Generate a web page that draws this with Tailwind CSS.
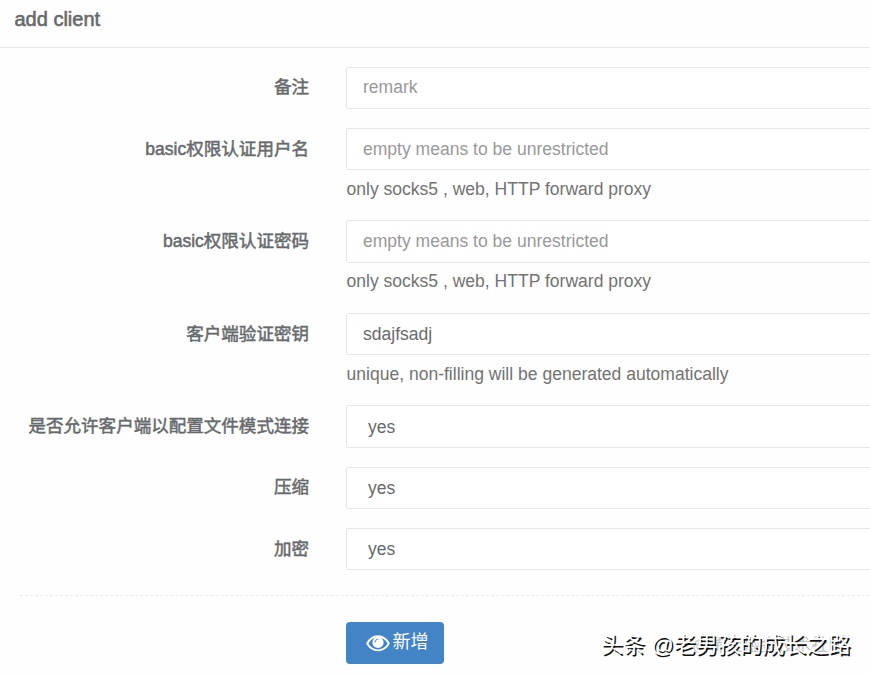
<!DOCTYPE html>
<html lang="zh">
<head>
  <meta charset="UTF-8" />
  <title>add client</title>
  <script src="https://cdn.jsdelivr.net/npm/@tailwindcss/browser@4"></script>
</head>

<body class="relative w-[870px] h-[675px] overflow-hidden bg-[#fefefe] font-['Liberation_Sans','Noto_Sans_CJK_SC',sans-serif] text-[17.55px] leading-[25px] text-[#676a6c]">

  <!-- TITLE -->
  <header class="h-12 pl-[14.5px] pt-[7px] border-b border-[#e7eaec]">
    <h5 class="text-[20px] leading-[25px] [-webkit-text-stroke:0.6px_#676a6c]">add client</h5>
  </header>

  <!-- FORM -->
  <form class="pt-[19px]">
    <div class="flex h-[61px]">
      <label class="w-[309px] shrink-0 mr-[37px] pt-[8px] text-right [-webkit-text-stroke:0.5px_#676a6c]">备注</label>
      <div class="w-[560px] shrink-0">
        <input type="text" placeholder="remark" class="block w-full h-[42px] px-4 pb-px border border-[#e5e6e7] rounded-[2px] bg-white placeholder:text-[#999]">
      </div>
    </div>

    <div class="flex h-[92px]">
      <label class="w-[309px] shrink-0 mr-[37px] pt-[9px] text-right [-webkit-text-stroke:0.5px_#676a6c]">basic权限认证用户名</label>
      <div class="w-[560px] shrink-0">
        <input type="text" placeholder="empty means to be unrestricted" class="block w-full h-[42px] px-4 border border-[#e5e6e7] rounded-[2px] bg-white placeholder:text-[#999]">
        <span class="block pt-[7px] pl-[0.5px] text-[#737373]">only socks5 , web, HTTP forward proxy</span>
      </div>
    </div>

    <div class="flex h-[93px]">
      <label class="w-[309px] shrink-0 mr-[37px] pt-[9px] text-right [-webkit-text-stroke:0.5px_#676a6c]">basic权限认证密码</label>
      <div class="w-[560px] shrink-0">
        <input type="text" placeholder="empty means to be unrestricted" class="block w-full h-[43px] px-4 border border-[#e5e6e7] rounded-[2px] bg-white placeholder:text-[#999]">
        <span class="block pt-[6px] pl-[0.5px] text-[#737373]">only socks5 , web, HTTP forward proxy</span>
      </div>
    </div>

    <div class="flex h-[92px]">
      <label class="w-[309px] shrink-0 mr-[37px] pt-[9px] text-right [-webkit-text-stroke:0.5px_#676a6c]">客户端验证密钥</label>
      <div class="w-[560px] shrink-0">
        <input type="text" value="sdajfsadj" class="block w-full h-[42px] px-4 border border-[#e5e6e7] rounded-[2px] bg-white">
        <span class="block pt-[7px] pl-[0.5px] text-[#737373]">unique, non-filling will be generated automatically</span>
      </div>
    </div>

    <div class="flex h-[62px]">
      <label class="w-[309px] shrink-0 mr-[37px] pt-[9px] text-right [-webkit-text-stroke:0.5px_#676a6c]">是否允许客户端以配置文件模式连接</label>
      <div class="w-[560px] shrink-0">
        <select class="block w-full h-[43px] px-[21px] pt-px border border-[#e5e6e7] rounded-[2px] bg-white appearance-none">
          <option>yes</option>
          <option>no</option>
        </select>
      </div>
    </div>

    <div class="flex h-[61px]">
      <label class="w-[309px] shrink-0 mr-[37px] pt-[8px] text-right [-webkit-text-stroke:0.5px_#676a6c]">压缩</label>
      <div class="w-[560px] shrink-0">
        <select class="block w-full h-[42px] px-[21px] border border-[#e5e6e7] rounded-[2px] bg-white appearance-none">
          <option>yes</option>
          <option>no</option>
        </select>
      </div>
    </div>

    <div class="flex h-[67px]">
      <label class="w-[309px] shrink-0 mr-[37px] pt-[9px] text-right [-webkit-text-stroke:0.5px_#676a6c]">加密</label>
      <div class="w-[560px] shrink-0">
        <select class="block w-full h-[42px] px-[21px] border border-[#e5e6e7] rounded-[2px] bg-white appearance-none">
          <option>yes</option>
          <option>no</option>
        </select>
      </div>
    </div>

    <div class="ml-5 border-t border-dashed border-[#e7eaec]"></div>

    <button type="button" class="flex items-center mt-[26px] ml-[346px] w-[98px] h-[42px] pl-[19.5px] rounded-[4px] bg-[#4384c6] text-white text-[18px]">
      <svg class="w-6 h-[17px] mr-[3px] mt-px" viewBox="0 0 24 17" fill="none">
        <path d="M1.2 8.5C6.4 -1.2 17.6 -1.2 22.8 8.5C17.6 17.6 6.4 17.6 1.2 8.5Z" stroke="currentColor" stroke-width="1.9" stroke-linejoin="round" />
        <circle cx="12" cy="7.4" r="5.6" fill="currentColor" />
        <path d="M8.9 7.2A3.1 3.1 0 0 1 12 4.1" stroke="#4384c6" stroke-width="0.9" stroke-linecap="round" />
      </svg>
      <span class="-mt-px">新增</span>
    </button>
  </form>

  <!-- WATERMARKS -->
  <div class="absolute left-[692px] top-[633px] text-[17px] text-[#c4c4c4] whitespace-nowrap">@稀土掘金技术社区</div>
  <div class="absolute left-[601px] top-[630px] text-[22.1px] leading-[30px] text-white whitespace-nowrap [text-shadow:1.5px_1.5px_0_#111]">头条 @老男孩的成长之路</div>
</body>
</html>
